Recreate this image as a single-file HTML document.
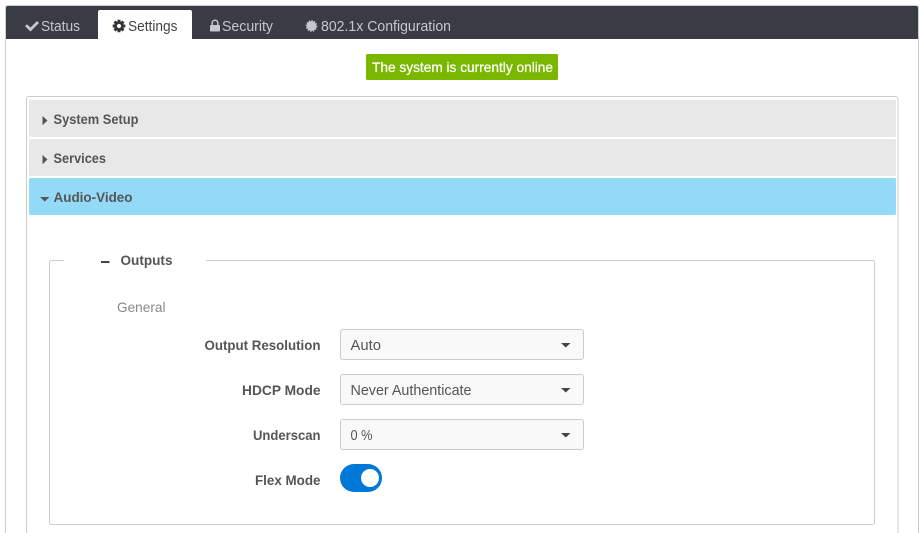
<!DOCTYPE html>
<html><head><meta charset="utf-8">
<style>
html,body{margin:0;padding:0;background:#fff;width:923px;height:533px;overflow:hidden}
svg{display:block;font-family:"Liberation Sans",sans-serif}
.tab{font-size:14.5px;fill:#c4c7cc}
.hd{font-size:14px;font-weight:bold;fill:#555}
.lb{font-size:14px;font-weight:bold;fill:#555}
.v{font-size:14.5px;fill:#555}
</style></head><body>
<svg width="923" height="533" viewBox="0 0 923 533" xmlns="http://www.w3.org/2000/svg">
<path d="M5.5 533V8a2.500 2.500 0 0 1 2.500-2.500H916a2.500 2.500 0 0 1 2.500 2.500V533" fill="#fff" stroke="#ccc"/>
<path d="M6 39V8a2 2 0 0 1 2-2H916a2 2 0 0 1 2 2V39z" fill="#393c44"/>
<path d="M98 39V12a2 2 0 0 1 2-2H190a2 2 0 0 1 2 2V39z" fill="#fff"/>

<path d="M25 26.300l2-2 3.500 3.200 6.500-6.500 2 2-8.500 8.500z" fill="#c4c7cc"/>
<text class="tab" x="41" y="31" textLength="39" lengthAdjust="spacingAndGlyphs">Status</text>

<g transform="translate(119 26)" fill="#333">
<circle r="4.800"/>
<path d="M-1.500-6.300h3v12.600h-3zM-6.300-1.500h12.600v3h-12.600z"/>
<path d="M-1.500-6.300h3v12.600h-3z" transform="rotate(45)"/>
<path d="M-1.500-6.300h3v12.600h-3z" transform="rotate(-45)"/>
<circle r="2.100" fill="#fff"/>
</g>
<text class="tab" style="fill:#444" x="128" y="31" textLength="49.500" lengthAdjust="spacingAndGlyphs">Settings</text>

<path d="M212.200 25.500v-2.500a2.800 2.800 0 0 1 5.600 0v2.500" fill="none" stroke="#c4c7cc" stroke-width="1.500"/>
<rect x="210" y="25" width="10" height="6.500" rx=".8" fill="#c4c7cc"/>
<text class="tab" x="222" y="31" textLength="51" lengthAdjust="spacingAndGlyphs">Security</text>

<circle cx="311.500" cy="26" r="5" fill="#c4c7cc"/>
<circle cx="311.500" cy="26" r="5.400" fill="none" stroke="#c4c7cc" stroke-width="1" stroke-dasharray="1.400 1.400"/>
<text class="tab" x="321" y="31" textLength="130" lengthAdjust="spacingAndGlyphs">802.1x Configuration</text>

<rect x="366" y="54" width="192" height="26" rx="1.500" fill="#7ab800"/>
<text x="372" y="72" font-size="14" fill="#fff" stroke="#fff" stroke-width=".25" textLength="181" lengthAdjust="spacingAndGlyphs">The system is currently online</text>

<path d="M26.500 533V99a2.500 2.500 0 0 1 2.500-2.500H895.500a2.500 2.500 0 0 1 2.500 2.500V533" fill="#fff" stroke="#ccc"/>
<rect x="29" y="100" width="867" height="37" rx="1.500" fill="#e8e8e8"/>
<rect x="29" y="139" width="867" height="37" rx="1.500" fill="#e8e8e8"/>
<rect x="29" y="178" width="867" height="37" rx="1.500" fill="#93daf8"/>

<path d="M42.500 116l5 4.500-5 4.800z" fill="#555"/>
<text class="hd" x="53.500" y="124" textLength="85" lengthAdjust="spacingAndGlyphs">System Setup</text>
<path d="M42.500 155l5 4.500-5 4.800z" fill="#555"/>
<text class="hd" x="53.500" y="163" textLength="52.500" lengthAdjust="spacingAndGlyphs">Services</text>
<path d="M40 197h9.500l-4.750 4.500z" fill="#555"/>
<text class="hd" x="53.500" y="202" textLength="79" lengthAdjust="spacingAndGlyphs">Audio-Video</text>

<path d="M64 260.500H51.500a2 2 0 0 0-2 2V522.500a2 2 0 0 0 2 2H872.500a2 2 0 0 0 2-2V262.500a2 2 0 0 0-2-2H206" fill="none" stroke="#ccc"/>
<rect x="101" y="261" width="8.500" height="2" fill="#444"/>
<text class="lb" x="120.500" y="265" textLength="52" lengthAdjust="spacingAndGlyphs">Outputs</text>
<text x="117" y="312" font-size="14" fill="#888" textLength="48.500" lengthAdjust="spacingAndGlyphs">General</text>

<text class="lb" x="204.500" y="350" textLength="116" lengthAdjust="spacingAndGlyphs">Output Resolution</text>
<text class="lb" x="242" y="395" textLength="78.500" lengthAdjust="spacingAndGlyphs">HDCP Mode</text>
<text class="lb" x="253" y="440" textLength="67.500" lengthAdjust="spacingAndGlyphs">Underscan</text>
<text class="lb" x="255" y="485" textLength="65.500" lengthAdjust="spacingAndGlyphs">Flex Mode</text>

<rect x="340.500" y="329.500" width="243" height="30" rx="2.500" fill="#f9f9f9" stroke="#ccc"/>
<rect x="340.500" y="374.500" width="243" height="30" rx="2.500" fill="#f9f9f9" stroke="#ccc"/>
<rect x="340.500" y="419.500" width="243" height="30" rx="2.500" fill="#f9f9f9" stroke="#ccc"/>
<text class="v" x="350.500" y="350" textLength="30.500" lengthAdjust="spacingAndGlyphs">Auto</text>
<text class="v" x="350.500" y="395" textLength="121" lengthAdjust="spacingAndGlyphs">Never Authenticate</text>
<text class="v" x="350.500" y="440" textLength="22" lengthAdjust="spacingAndGlyphs">0 %</text>
<path d="M561 343h9.500l-4.750 4.500z" fill="#444"/>
<path d="M561 388h9.500l-4.750 4.500z" fill="#444"/>
<path d="M561 433h9.500l-4.750 4.500z" fill="#444"/>

<rect x="340" y="464" width="42" height="28" rx="14" fill="#0078d7"/>
<circle cx="370" cy="478" r="9" fill="#fff"/>
</svg>
</body></html>
